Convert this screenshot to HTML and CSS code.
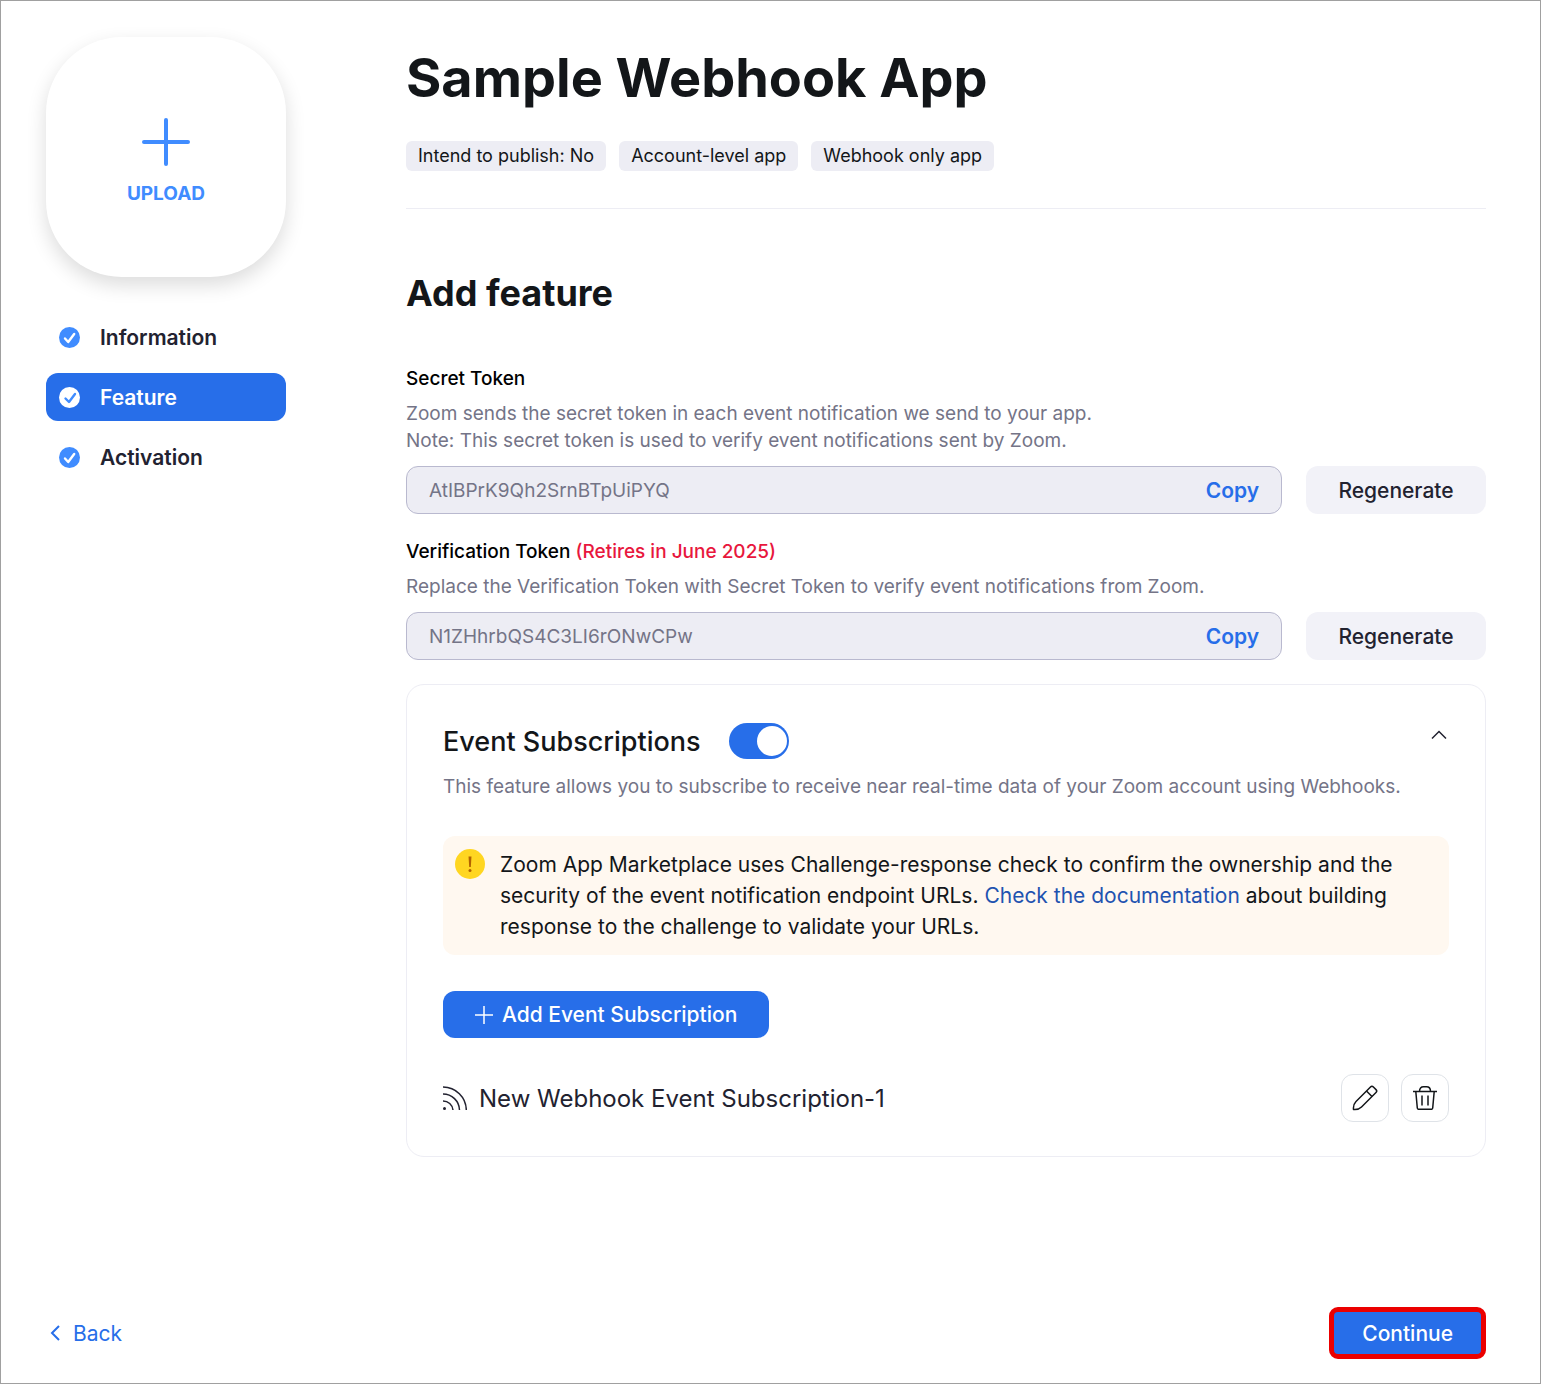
FILE: index.html
```
<!DOCTYPE html>
<html lang="en">
<head>
    <meta charset="UTF-8">
    <meta name="viewport" content="width=device-width, initial-scale=1.0">
    <title>Sample Webhook App</title>
    <link rel="stylesheet" href="styles.css">
</head>
<body>

<div class="page">
    <div class="content">
        <aside class="sidebar">
            <button type="button" class="upload">
                <svg width="48" height="48" viewBox="0 0 48 48" fill="none" stroke="currentColor" stroke-width="4" stroke-linecap="round">
                    <path d="M24 2v44M2 24h44"/>
                </svg>
                <span>UPLOAD</span>
            </button>

            <nav class="steps">
                <a href="#" class="step">
                    <svg width="21" height="21" viewBox="0 0 21 21">
                        <circle class="step-dot" cx="10.5" cy="10.5" r="10.5"/>
                        <path class="step-check" d="M6 11.5l3.2 3.5 6-8"/>
                    </svg>
                    Information
                </a>
                <a href="#" class="step active">
                    <svg width="21" height="21" viewBox="0 0 21 21">
                        <circle class="step-dot" cx="10.5" cy="10.5" r="10.5"/>
                        <path class="step-check" d="M6.5 11.5l3.5 3.5 6-8"/>
                    </svg>
                    Feature
                </a>
                <a href="#" class="step">
                    <svg width="21" height="21" viewBox="0 0 21 21">
                        <circle class="step-dot" cx="10.5" cy="10.5" r="10.5"/>
                        <path class="step-check" d="M6 11.5l3.2 3.5 6-8"/>
                    </svg>
                    Activation
                </a>
            </nav>
        </aside>

        <main class="main">
            <header class="app-header">
                <h1>Sample Webhook App</h1>
                <div class="tags">
                    <span class="tag">Intend to publish: No</span>
                    <span class="tag">Account-level app</span>
                    <span class="tag">Webhook only app</span>
                </div>
            </header>

            <h2>Add feature</h2>

            <section class="field">
                <label for="secretToken">Secret Token</label>
                <p class="hint">Zoom sends the secret token in each event notification we send to your app.<br>Note: This secret token is used to verify event notifications sent by Zoom.</p>
                <div class="token-row">
                    <div class="token-box">
                        <input type="text" id="secretToken" value="AtIBPrK9Qh2SrnBTpUiPYQ" readonly>
                        <button type="button" class="copy">Copy</button>
                    </div>
                    <button type="button" class="regenerate">Regenerate</button>
                </div>
            </section>

            <section class="field">
                <label for="verificationToken">Verification Token <span class="retires">(Retires in June 2025)</span></label>
                <p class="hint">Replace the Verification Token with Secret Token to verify event notifications from Zoom.</p>
                <div class="token-row">
                    <div class="token-box">
                        <input type="text" id="verificationToken" value="N1ZHhrbQS4C3LI6rONwCPw" readonly>
                        <button type="button" class="copy">Copy</button>
                    </div>
                    <button type="button" class="regenerate">Regenerate</button>
                </div>
            </section>

            <section class="card">
                <div class="card-head">
                    <label class="card-title" for="eventSwitch">Event Subscriptions</label>
                    <input type="checkbox" class="switch" id="eventSwitch" checked>
                    <button type="button" class="collapse" aria-label="Collapse">
                        <svg width="20" height="20" viewBox="0 0 20 20" fill="none" stroke="currentColor" stroke-width="1.5">
                            <path d="M3 11.5l7-7 7 7"/>
                        </svg>
                    </button>
                </div>
                <p class="hint">This feature allows you to subscribe to receive near real-time data of your Zoom account using Webhooks.</p>

                <div class="alert">
                    <svg width="30" height="30" viewBox="0 0 30 30">
                        <circle cx="15" cy="15" r="15" fill="#ffd621"/>
                        <path d="M13.5 7.5h3L15.8 18h-1.6z" fill="#b36200"/>
                        <circle cx="15" cy="21.5" r="1.5" fill="#b36200"/>
                    </svg>
                    <p>Zoom App Marketplace uses Challenge-response check to confirm the ownership and the security of the event notification endpoint URLs. <a href="#">Check the documentation</a> about building response to the challenge to validate your URLs.</p>
                </div>

                <button type="button" class="add">
                    <svg width="18" height="18" viewBox="0 0 18 18" fill="none" stroke="currentColor" stroke-width="1.5">
                        <path d="M9 0v18M0 9h18"/>
                    </svg>
                    Add Event Subscription
                </button>

                <div class="subscription">
                    <svg width="24" height="24" viewBox="0 0 24 24" fill="none" stroke="currentColor" stroke-width="1.5">
                        <path d="M0 1a23.3 23.3 0 0 1 23.3 23M0 8a16.5 16.5 0 0 1 16.5 16M0 15a10 10 0 0 1 10 9"/>
                        <circle cx="1.5" cy="22.5" r="1.5" fill="currentColor" stroke="none"/>
                    </svg>
                    <span class="subscription-name">New Webhook Event Subscription-1</span>
                    <button type="button" class="icon-btn" aria-label="Edit">
                        <svg width="26" height="26" viewBox="0 0 26 26" fill="none" stroke="currentColor" stroke-width="1.5" stroke-linejoin="round">
                            <path d="M1.5 24.5c-.3-3 .5-6 2.500-8L18.500 2c.9-.9 2-.9 2.900 0l2.600 2.600c.9.9.9 2 0 2.900L9.500 22c-2 2-5 2.800-8 2.500z"/>
                            <path d="M14.500 6l5.500 5.500"/>
                        </svg>
                    </button>
                    <button type="button" class="icon-btn" aria-label="Delete">
                        <svg width="24" height="24" viewBox="0 0 24 24" fill="none" stroke="currentColor" stroke-width="1.5">
                            <path d="M0 5.500h24M6.500 5.500C6.500 2.500 8 .8 10.500.8h3c2.500 0 4 1.700 4 4.700"/>
                            <path d="M2.800 5.500L4.300 22c.1.900.6 1.300 1.400 1.300h12.600c.8 0 1.300-.4 1.400-1.300l1.500-16.500"/>
                            <path d="M9 9.500v10M15 9.500v10"/>
                        </svg>
                    </button>
                </div>
            </section>
        </main>
    </div>

    <footer class="footer">
        <a href="#" class="back">
            <svg width="10" height="16" viewBox="0 0 10 16" fill="none" stroke="currentColor" stroke-width="2">
                <path d="M9 1L2 8l7 7"/>
            </svg>
            Back
        </a>
        <button type="button" class="continue">Continue</button>
    </footer>
</div>

</body>
</html>
```

FILE: styles.css
```
* {
    box-sizing: border-box;
}
body {
    margin: 0;
    font-family: Inter, "Liberation Sans", sans-serif;
    font-size: 19px;
    color: #131619;
    background-color: #fff;
}
h1, h2, p {
    margin: 0;
}
button, input {
    font-family: inherit;
    margin: 0;
}
button {
    border: none;
    padding: 0;
    cursor: pointer;
}
a {
    text-decoration: none;
}
svg {
    flex: none;
}
.page {
    display: flex;
    flex-direction: column;
    justify-content: space-between;
    min-height: 100vh;
    padding: 36px 54px 24px 45px;
    border: 1px solid #a0a0a0;
}
.content {
    display: flex;
    gap: 120px;
}

/* Sidebar */
.sidebar {
    flex: none;
    width: 240px;
}
.upload {
    display: flex;
    flex-direction: column;
    align-items: center;
    justify-content: center;
    gap: 16px;
    width: 240px;
    height: 240px;
    padding-top: 10px;
    border-radius: 76px;
    background-color: #fff;
    box-shadow: 0 8px 20px rgba(0, 0, 0, 0.14);
    font-size: 19px;
    font-weight: 700;
    line-height: 24px;
    color: #408cff;
}
.steps {
    display: flex;
    flex-direction: column;
    gap: 12px;
    margin-top: 36px;
}
.step {
    display: flex;
    align-items: center;
    gap: 20px;
    height: 48px;
    padding: 0 13px;
    border-radius: 12px;
    font-size: 21px;
    font-weight: 600;
    color: #222230;
}
.step-dot {
    fill: #408cff;
}
.step-check {
    fill: none;
    stroke: #fff;
    stroke-width: 2.4;
    stroke-linecap: round;
    stroke-linejoin: round;
}
.step.active {
    background-color: #276ee9;
    color: #fff;
}
.active .step-dot {
    fill: #fff;
}
.active .step-check {
    stroke: #408cff;
}

/* Main column */
.main {
    flex: 1;
    min-width: 0;
}
.app-header {
    padding-bottom: 37px;
    border-bottom: 1px solid #ededf4;
}
h1 {
    padding-top: 5px;
    font-size: 54px;
    font-weight: 700;
    line-height: 72px;
}
.tags {
    display: flex;
    gap: 13px;
    margin-top: 27px;
}
.tag {
    padding: 0 12px;
    border-radius: 6px;
    background-color: #ededf4;
    font-size: 18px;
    line-height: 30px;
}
h2 {
    margin: 60px 0 48px;
    font-size: 36px;
    font-weight: 700;
    line-height: 48px;
}
.field {
    margin-bottom: 24px;
}
.field label {
    display: block;
    margin-bottom: 7px;
    font-weight: 500;
    line-height: 28px;
    color: #000;
}
.retires {
    color: #e8173d;
}
.hint {
    line-height: 27px;
    color: #747487;
}
.token-row {
    display: flex;
    gap: 24px;
    margin-top: 12px;
}
.token-box {
    display: flex;
    flex: 1;
    height: 48px;
    padding: 0 22px;
    border: 1px solid #b9b9cf;
    border-radius: 12px;
    background-color: #ededf4;
}
.token-box input {
    flex: 1;
    min-width: 0;
    padding: 0;
    border: none;
    outline: none;
    background: none;
    font-size: 19px;
    color: #747487;
}
.copy {
    background: none;
    font-size: 21px;
    font-weight: 600;
    color: #276ee9;
}
.regenerate {
    width: 180px;
    border-radius: 12px;
    background-color: #f2f2f8;
    font-size: 21px;
    font-weight: 500;
    color: #222230;
}

/* Event subscriptions */
.card {
    padding: 36px 36px 34px;
    border: 1px solid #ededf4;
    border-radius: 18px;
}
.card-head {
    display: flex;
    align-items: center;
    gap: 28px;
    height: 40px;
    margin-bottom: 12px;
}
.card-title {
    font-size: 27px;
    font-weight: 500;
}
.switch {
    appearance: none;
    display: flex;
    justify-content: flex-end;
    width: 60px;
    height: 36px;
    margin: 0;
    padding: 3px 2px;
    border-radius: 18px;
    background-color: #276ee9;
}
.switch::before {
    content: "";
    width: 30px;
    height: 30px;
    border-radius: 50%;
    background-color: #fff;
}
.switch:not(:checked) {
    justify-content: flex-start;
    background-color: #b9b9cf;
}
.collapse {
    display: flex;
    align-self: flex-start;
    margin-left: auto;
    padding-top: 6px;
    background: none;
    color: #222230;
}
.alert {
    display: flex;
    gap: 15px;
    margin: 36px 0;
    padding: 13px 12px;
    border-radius: 12px;
    background-color: #fff8f0;
    font-size: 21px;
    line-height: 31px;
}
.alert a {
    color: #1f53b0;
}
.add {
    display: flex;
    align-items: center;
    gap: 9px;
    height: 47px;
    padding: 0 32px;
    border-radius: 12px;
    background-color: #276ee9;
    font-size: 21px;
    font-weight: 500;
    color: #fff;
}
.subscription {
    display: flex;
    align-items: center;
    gap: 12px;
    margin-top: 36px;
    color: #222230;
}
.subscription-name {
    flex: 1;
    font-size: 24px;
}
.icon-btn {
    display: flex;
    align-items: center;
    justify-content: center;
    width: 48px;
    height: 48px;
    border: 1px solid #dfe3e8;
    border-radius: 12px;
    background-color: #fff;
    color: #131619;
}

/* Footer */
.footer {
    display: flex;
    align-items: center;
    justify-content: space-between;
}
.back {
    display: flex;
    align-items: center;
    gap: 13px;
    padding-left: 4px;
    font-size: 21px;
    color: #276ee9;
}
.continue {
    height: 52px;
    padding: 0 28px;
    border: 5px solid #eb0000;
    border-radius: 9px;
    background-color: #276ee9;
    font-size: 21px;
    font-weight: 500;
    color: #fff;
}
```
